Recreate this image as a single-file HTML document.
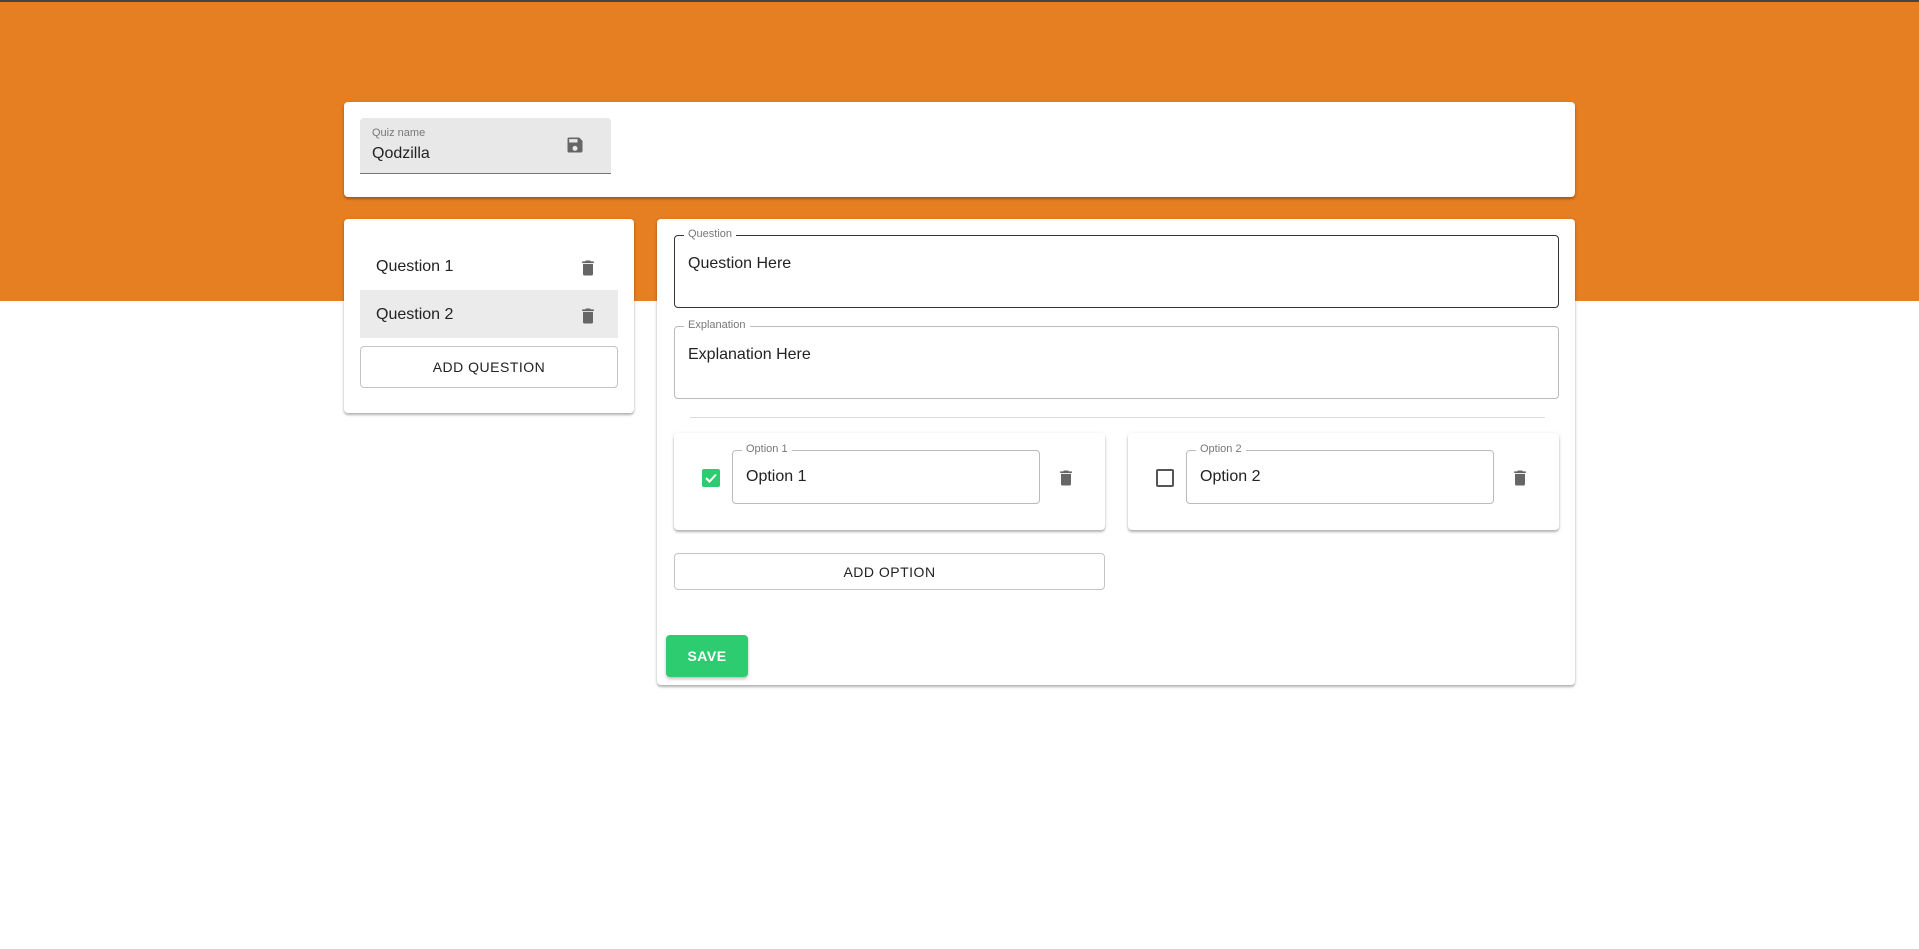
<!DOCTYPE html>
<html><head><meta charset="utf-8"><style>
*{box-sizing:border-box;margin:0;padding:0}
body{width:1919px;height:949px;background:#fff;font-family:"Liberation Sans",sans-serif;position:relative;overflow:hidden;color:#222}
.band{position:absolute;left:0;top:0;width:1919px;height:301px;background:#e67e22;border-top:2px solid #444}
.card{position:absolute;background:#fff;border-radius:4px;box-shadow:0 2px 2px rgba(0,0,0,.25),0 1px 4px rgba(0,0,0,.1)}
.abs{position:absolute}
.fs{position:absolute;border:1px solid #bbb;border-radius:4px}
.lab{position:absolute;top:-8px;left:9px;background:#fff;padding:0 4px;font-size:11px;color:#777}
.txt{position:absolute;font-size:16px;color:#222}
.btn{position:absolute;border:1px solid #c4c4c4;border-radius:4px;font-size:14px;letter-spacing:.5px;display:flex;align-items:center;justify-content:center;color:#222}
</style></head><body>
<div class="band"></div>
<div class="card" style="left:344px;top:102px;width:1231px;height:95px">
  <div class="abs" style="left:16px;top:16px;width:251px;height:56px;background:#e8e8e8;border-radius:4px 4px 0 0;border-bottom:1px solid #777">
    <div class="abs" style="left:12px;top:9px;font-size:11px;color:#777">Quiz name</div>
    <div class="abs" style="left:12px;top:27px;font-size:16px">Qodzilla</div>
    <svg class="abs" style="left:205px;top:17px" width="20" height="20" viewBox="0 0 24 24"><path fill="#666" d="M17 3H5a2 2 0 0 0-2 2v14a2 2 0 0 0 2 2h14a2 2 0 0 0 2-2V7l-4-4zm-5 16a3 3 0 1 1 0-6 3 3 0 0 1 0 6zm3-10H5V5h10v4z"/></svg>
  </div>
</div>
<div class="card" style="left:344px;top:219px;width:290px;height:194px">
  <div class="txt" style="left:32px;top:39px">Question 1</div>
  <svg class="abs" style="left:234px;top:37px" width="20" height="24" viewBox="0 0 24 24"><path fill="#666" d="M6 19a2 2 0 0 0 2 2h8a2 2 0 0 0 2-2V7H6v12zM19 4h-3.5l-1-1h-5l-1 1H5v2h14V4z"/></svg>
  <div class="abs" style="left:16px;top:71px;width:258px;height:48px;background:#ebebeb"></div>
  <div class="txt" style="left:32px;top:87px">Question 2</div>
  <svg class="abs" style="left:234px;top:85px" width="20" height="24" viewBox="0 0 24 24"><path fill="#666" d="M6 19a2 2 0 0 0 2 2h8a2 2 0 0 0 2-2V7H6v12zM19 4h-3.5l-1-1h-5l-1 1H5v2h14V4z"/></svg>
  <div class="btn" style="left:16px;top:127px;width:258px;height:42px">ADD QUESTION</div>
</div>
<div class="card" style="left:657px;top:219px;width:918px;height:466px">
  <div class="fs" style="left:17px;top:16px;width:885px;height:73px;border-color:#333"><span class="lab">Question</span><div class="txt" style="left:13px;top:19px">Question Here</div></div>
  <div class="fs" style="left:17px;top:107px;width:885px;height:73px"><span class="lab">Explanation</span><div class="txt" style="left:13px;top:19px">Explanation Here</div></div>
  <div class="abs" style="left:33px;top:198px;width:855px;height:1px;background:#ddd"></div>
  <div class="card" style="left:17px;top:214px;width:431px;height:97px">
    <div class="abs" style="left:28px;top:36px;width:18px;height:18px;background:#2ecc71;border-radius:2px"><svg width="18" height="18" viewBox="0 0 18 18"><path d="M4 9l3.5 3.5L14 5.5" stroke="#fff" stroke-width="2" fill="none"/></svg></div>
    <div class="fs" style="left:58px;top:17px;width:308px;height:54px"><span class="lab">Option 1</span><div class="txt" style="left:13px;top:17px">Option 1</div></div>
    <svg class="abs" style="left:382px;top:33px" width="20" height="24" viewBox="0 0 24 24"><path fill="#666" d="M6 19a2 2 0 0 0 2 2h8a2 2 0 0 0 2-2V7H6v12zM19 4h-3.5l-1-1h-5l-1 1H5v2h14V4z"/></svg>
  </div>
  <div class="card" style="left:471px;top:214px;width:431px;height:97px">
    <div class="abs" style="left:28px;top:36px;width:18px;height:18px;border:2px solid #555;border-radius:2px"></div>
    <div class="fs" style="left:58px;top:17px;width:308px;height:54px"><span class="lab">Option 2</span><div class="txt" style="left:13px;top:17px">Option 2</div></div>
    <svg class="abs" style="left:382px;top:33px" width="20" height="24" viewBox="0 0 24 24"><path fill="#666" d="M6 19a2 2 0 0 0 2 2h8a2 2 0 0 0 2-2V7H6v12zM19 4h-3.5l-1-1h-5l-1 1H5v2h14V4z"/></svg>
  </div>
  <div class="btn" style="left:17px;top:334px;width:431px;height:37px">ADD OPTION</div>
  <div class="abs" style="left:9px;top:416px;width:82px;height:42px;background:#2ecc71;border-radius:4px;box-shadow:0 2px 3px rgba(0,0,0,.25);color:#fff;font-size:14px;font-weight:bold;display:flex;align-items:center;justify-content:center;letter-spacing:.5px">SAVE</div>
</div>
</body></html>
